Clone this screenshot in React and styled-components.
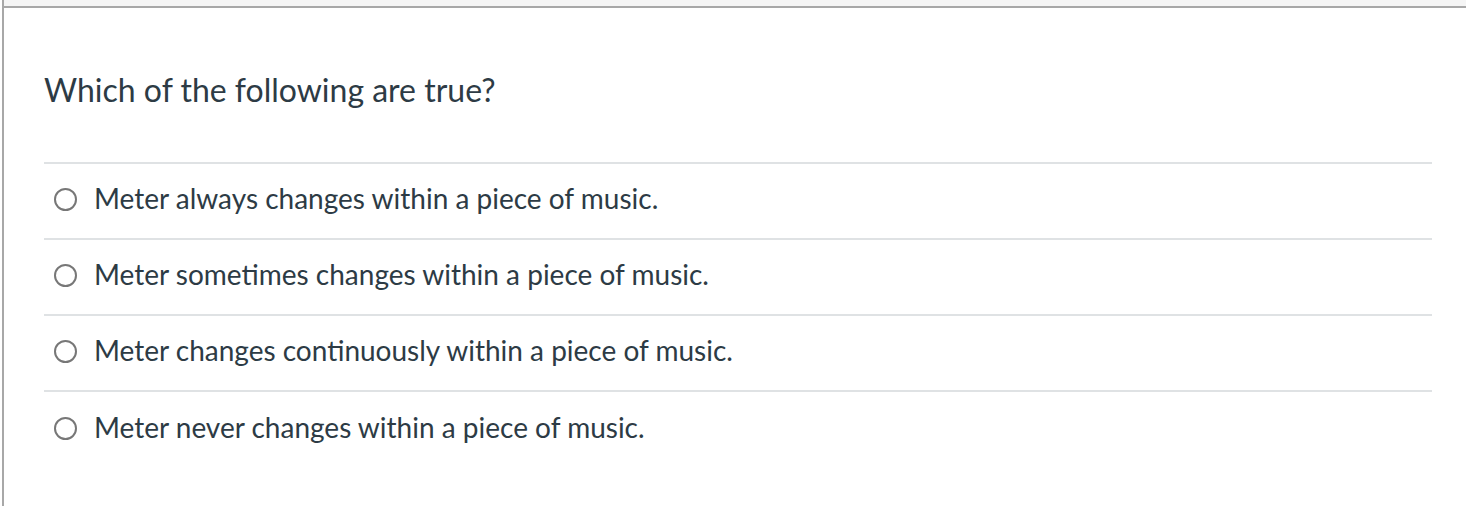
import styled, { createGlobalStyle } from "styled-components";

const GlobalStyle = createGlobalStyle`
  html, body {
    margin: 0;
    padding: 0;
    background: #ffffff;
  }
  body {
    font-family: Lato, "Liberation Sans", sans-serif;
    color: #2d3b45;
  }
`;

const answers = [
  "Meter always changes within a piece of music.",
  "Meter sometimes changes within a piece of music.",
  "Meter changes continuously within a piece of music.",
  "Meter never changes within a piece of music.",
];

const App = () => {
  return (
    <>
      <GlobalStyle />
      <Frame>
        <TopStrip />
        <QuestionBody>
          <QuestionText>Which of the following are true?</QuestionText>
          <AnswerList>
            {answers.map((a) => (
              <AnswerRow key={a}>
                <Radio type="radio" name="answer" />
                <AnswerLabel>{a}</AnswerLabel>
              </AnswerRow>
            ))}
          </AnswerList>
        </QuestionBody>
      </Frame>
    </>
  );
};

const Frame = styled.div`
  margin-left: 2px;
  border-left: 2px solid #a8a8a8;
  height: 506px;
  box-sizing: border-box;
`;

const TopStrip = styled.div`
  height: 6px;
  background: #f5f5f5;
  border-bottom: 2px solid #a8a8a8;
`;

const QuestionBody = styled.div`
  padding: 0 34px 0 40px;
`;

const QuestionText = styled.div`
  font-size: 32px;
  line-height: 40px;
  padding-top: 62px;
  padding-bottom: 52px;
  border-bottom: 2px solid #dfe2e4;
`;

const AnswerList = styled.div`
  display: flex;
  flex-direction: column;
`;

const AnswerRow = styled.label`
  display: flex;
  align-items: center;
  gap: 17px;
  box-sizing: border-box;
  height: 76px;
  padding: 0 0 4px 10px;
  border-bottom: 2px solid #dfe2e4;

  &:last-child {
    border-bottom: none;
  }
`;

const Radio = styled.input`
  appearance: none;
  margin: 0;
  width: 23px;
  height: 23px;
  border: 2px solid #777777;
  border-radius: 50%;
  box-sizing: border-box;
  background: #fff;
`;

const AnswerLabel = styled.span`
  font-size: 28px;
  line-height: 34px;
  margin-top: -2px;
`;

export default App;
